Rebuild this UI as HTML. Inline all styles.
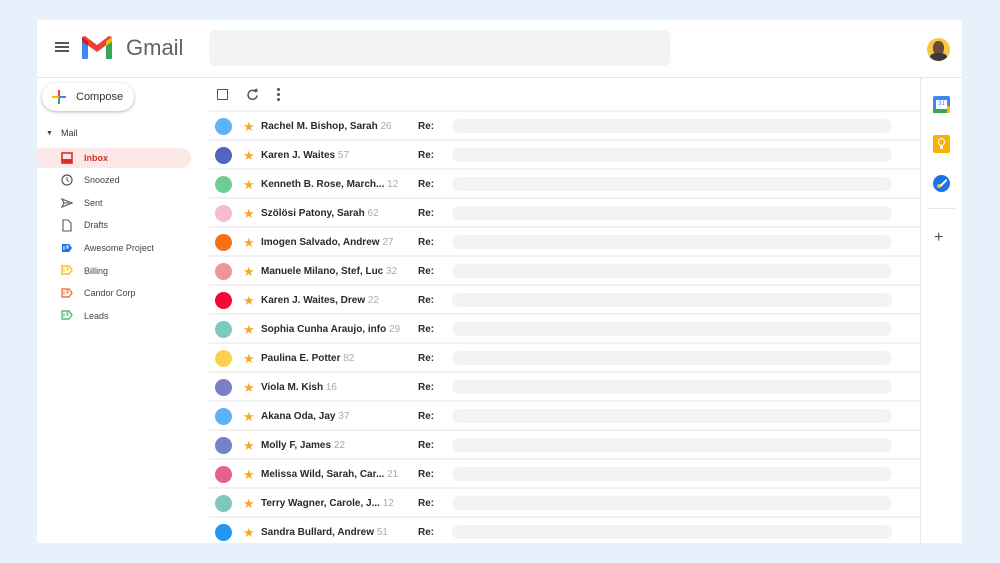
<!DOCTYPE html>
<html><head><meta charset="utf-8"><style>
*{margin:0;padding:0;box-sizing:border-box}
body{width:1000px;height:563px;background:#e8f1fb;font-family:"Liberation Sans",Arial,sans-serif;position:relative;overflow:hidden}
.panel{position:absolute;left:37px;top:20px;width:925px;height:523px;background:#fff;overflow:hidden}
.a{position:absolute}
.row{position:absolute;left:172px;width:711px;height:29px;border-bottom:2px solid #f1f1f1}
.row .c{position:absolute;left:6px;top:6px;width:17px;height:17px;border-radius:50%}
.row .s{position:absolute;left:34px;top:7px;font-size:13px;color:#f4a825;line-height:16px}
.row .n{position:absolute;left:52px;top:9px;font-size:10px;font-weight:bold;color:#2a2a2a;white-space:nowrap}
.row .n span{color:#aaa;font-weight:normal}
.row .r{position:absolute;left:209px;top:9px;font-size:10px;font-weight:bold;color:#2a2a2a}
.row .b{position:absolute;left:243px;top:7px;width:440px;height:14px;background:#f1f3f4;border-radius:7px}
.nav{position:absolute;left:47px;font-size:9px;color:#444}
.ic{position:absolute;left:24px}
</style></head><body>
<div class="panel">
 <div class="a" style="left:18px;top:22px;width:14px;height:2px;background:#555;box-shadow:0 4px 0 #555,0 8px 0 #555"></div>
 <svg class="a" style="left:45px;top:16px" width="30" height="23" viewBox="0 0 30 23">
  <rect x="0" y="4" width="6" height="19" rx="1" fill="#4285f4"/>
  <rect x="24" y="4" width="6" height="19" rx="1" fill="#34a853"/>
  <path d="M0 5 L15 16 L30 5 L30 1 L27 0 L15 9 L3 0 L0 1Z" fill="#ea4335"/>
  <path d="M0 1 L6 5.5 L6 10 L0 5.5Z" fill="#c5221f"/>
  <path d="M30 1 L24 5.5 L24 10 L30 5.5Z" fill="#fbbc04"/>
 </svg>
 <div class="a" style="left:89px;top:15px;font-size:22px;color:#5f6368">Gmail</div>
 <div class="a" style="left:172px;top:10px;width:461px;height:36px;background:#f1f3f4;border-radius:7px"></div>
 <div class="a" style="left:890px;top:18px;width:23px;height:23px;border-radius:50%;background:#f6c744;overflow:hidden">
  <div class="a" style="left:6px;top:3px;width:11px;height:14px;border-radius:45%;background:#6b4a3a"></div>
  <div class="a" style="left:3px;top:15px;width:17px;height:10px;border-radius:40%;background:#3a3a3a"></div>
 </div>
 <div class="a" style="left:0;top:57px;width:925px;height:1px;background:#e6e6e6"></div>
 <div class="a" style="left:5px;top:63px;width:92px;height:28px;border-radius:14px;background:#fff;box-shadow:0 1px 3px rgba(0,0,0,.3)"></div>
 <svg class="a" style="left:15px;top:70px" width="14" height="14"><rect x="6" y="0" width="2" height="7" fill="#ea4335"/><rect x="6" y="7" width="2" height="7" fill="#34a853"/><rect x="0" y="6" width="7" height="2" fill="#fbbc04"/><rect x="7" y="6" width="7" height="2" fill="#4285f4"/></svg>
 <div class="a" style="left:39px;top:71px;font-size:11px;color:#333">Compose</div>
 <div class="a" style="left:9px;top:110px;font-size:7px;color:#444">▼</div>
 <div class="a" style="left:24px;top:108px;font-size:9px;color:#333">Mail</div>
 <div class="a" style="left:0;top:128px;width:154px;height:20px;background:#fce8e6;border-radius:0 10px 10px 0"></div>
 <svg class="ic" style="top:132px" width="12" height="12"><rect x="1" y="1" width="10" height="10" fill="none" stroke="#d93025" stroke-width="1.6"/><rect x="1" y="7" width="10" height="4" fill="#d93025"/></svg>
 <div class="nav" style="top:133px;color:#d93025;font-weight:bold">Inbox</div>
 <svg class="ic" style="top:154px" width="12" height="12"><circle cx="6" cy="6" r="5" fill="none" stroke="#555" stroke-width="1.2"/><path d="M6 3v3l2 1.5" fill="none" stroke="#555"/></svg>
 <div class="nav" style="top:155px">Snoozed</div>
 <svg class="ic" style="top:177px" width="12" height="12"><path d="M1 2L11 6L1 10L3 6Z M3 6H8" fill="none" stroke="#555" stroke-width="1.1"/></svg>
 <div class="nav" style="top:178px">Sent</div>
 <svg class="ic" style="top:199px" width="12" height="13"><path d="M2 1H7L10 4V12H2Z" fill="none" stroke="#555" stroke-width="1.1"/></svg>
 <div class="nav" style="top:200px">Drafts</div>
 <svg class="ic" style="top:223px" width="12" height="10"><path d="M1 1H8L11 5L8 9H1Z" fill="#1a73e8"/><path d="M3 3V7M5 3H7V5H5" stroke="#fff" fill="none"/></svg>
 <div class="nav" style="top:223px">Awesome Project</div>
 <svg class="ic" style="top:245px" width="12" height="10"><path d="M1 1H8L11 5L8 9H1Z" fill="none" stroke="#f6bf26" stroke-width="1.4"/><path d="M3 3V7M5 3H7V5H5" stroke="#f6bf26" fill="none"/></svg>
 <div class="nav" style="top:246px">Billing</div>
 <svg class="ic" style="top:268px" width="12" height="10"><path d="M1 1H8L11 5L8 9H1Z" fill="none" stroke="#f4743a" stroke-width="1.4"/><path d="M3 3V7M5 3H7V5H5" stroke="#f4743a" fill="none"/></svg>
 <div class="nav" style="top:268px">Candor Corp</div>
 <svg class="ic" style="top:290px" width="12" height="10"><path d="M1 1H8L11 5L8 9H1Z" fill="none" stroke="#5bb974" stroke-width="1.4"/><path d="M3 3V7M5 3H7V5H5" stroke="#5bb974" fill="none"/></svg>
 <div class="nav" style="top:291px">Leads</div>
 <div class="a" style="left:180px;top:69px;width:11px;height:11px;border:1.5px solid #555"></div>
 <svg class="a" style="left:209px;top:68px" width="13" height="13"><path d="M10 4A4.5 4.5 0 1 0 11 7.5" fill="none" stroke="#555" stroke-width="1.5"/><path d="M8 1.5L11.5 4.5L11.5 0.5Z" fill="#555"/></svg>
 <div class="a" style="left:240px;top:68px;width:3px;height:3px;border-radius:50%;background:#555;box-shadow:0 5px 0 #555,0 10px 0 #555"></div>
 <div class="a" style="left:172px;top:90px;width:711px;height:2px;background:#f1f1f1"></div>
 <div class="a" style="left:883px;top:58px;width:1px;height:470px;background:#e6e6e6"></div>
 <div class="a" style="left:896px;top:76px;width:17px;height:17px;background:#4285f4;border-radius:2px">
  <div class="a" style="left:3px;top:4px;width:11px;height:9px;background:#fff;font-size:6px;color:#4285f4;text-align:center;line-height:9px">31</div>
  <div class="a" style="left:14px;top:10px;width:3px;height:7px;background:#fbbc04"></div>
  <div class="a" style="left:0;top:14px;width:14px;height:3px;background:#34a853"></div>
 </div>
 <div class="a" style="left:896px;top:115px;width:17px;height:18px;background:#f6b400;border-radius:2px">
  <div class="a" style="left:5px;top:3px;width:7px;height:8px;border:1.3px solid #fff;border-radius:50%"></div>
  <div class="a" style="left:7px;top:11px;width:3px;height:3px;background:#fff"></div>
 </div>
 <div class="a" style="left:896px;top:155px;width:17px;height:17px;background:#1a73e8;border-radius:50%">
  <div class="a" style="left:4px;top:9px;width:4px;height:4px;background:#fbbc04;border-radius:50%"></div>
  <div class="a" style="left:6px;top:7px;width:9px;height:2px;background:#fff;transform:rotate(-45deg)"></div>
 </div>
 <div class="a" style="left:891px;top:188px;width:27px;height:1px;background:#e6e6e6"></div>
 <div class="a" style="left:897px;top:210px;font-size:16px;color:#555;line-height:16px">+</div>
 <div class="row" style="top:92px"><div class="c" style="background:#5eb2f5"></div><div class="s">★</div><div class="n">Rachel M. Bishop, Sarah <span>26</span></div><div class="r">Re:</div><div class="b"></div></div>
 <div class="row" style="top:121px"><div class="c" style="background:#5463c1"></div><div class="s">★</div><div class="n">Karen J. Waites <span>57</span></div><div class="r">Re:</div><div class="b"></div></div>
 <div class="row" style="top:150px"><div class="c" style="background:#6cce95"></div><div class="s">★</div><div class="n">Kenneth B. Rose, March... <span>12</span></div><div class="r">Re:</div><div class="b"></div></div>
 <div class="row" style="top:179px"><div class="c" style="background:#f6bcd4"></div><div class="s">★</div><div class="n">Szölösi Patony, Sarah <span>62</span></div><div class="r">Re:</div><div class="b"></div></div>
 <div class="row" style="top:208px"><div class="c" style="background:#f57213"></div><div class="s">★</div><div class="n">Imogen Salvado, Andrew <span>27</span></div><div class="r">Re:</div><div class="b"></div></div>
 <div class="row" style="top:237px"><div class="c" style="background:#f39593"></div><div class="s">★</div><div class="n">Manuele Milano, Stef, Luc <span>32</span></div><div class="r">Re:</div><div class="b"></div></div>
 <div class="row" style="top:266px"><div class="c" style="background:#f5073a"></div><div class="s">★</div><div class="n">Karen J. Waites, Drew <span>22</span></div><div class="r">Re:</div><div class="b"></div></div>
 <div class="row" style="top:295px"><div class="c" style="background:#7dc8c0"></div><div class="s">★</div><div class="n">Sophia Cunha Araujo, info <span>29</span></div><div class="r">Re:</div><div class="b"></div></div>
 <div class="row" style="top:324px"><div class="c" style="background:#fdd150"></div><div class="s">★</div><div class="n">Paulina E. Potter <span>82</span></div><div class="r">Re:</div><div class="b"></div></div>
 <div class="row" style="top:353px"><div class="c" style="background:#7780c8"></div><div class="s">★</div><div class="n">Viola M. Kish <span>16</span></div><div class="r">Re:</div><div class="b"></div></div>
 <div class="row" style="top:382px"><div class="c" style="background:#5eb2f5"></div><div class="s">★</div><div class="n">Akana Oda, Jay <span>37</span></div><div class="r">Re:</div><div class="b"></div></div>
 <div class="row" style="top:411px"><div class="c" style="background:#7780c8"></div><div class="s">★</div><div class="n">Molly F, James <span>22</span></div><div class="r">Re:</div><div class="b"></div></div>
 <div class="row" style="top:440px"><div class="c" style="background:#e95f8b"></div><div class="s">★</div><div class="n">Melissa Wild, Sarah, Car... <span>21</span></div><div class="r">Re:</div><div class="b"></div></div>
 <div class="row" style="top:469px"><div class="c" style="background:#7dc8c0"></div><div class="s">★</div><div class="n">Terry Wagner, Carole, J... <span>12</span></div><div class="r">Re:</div><div class="b"></div></div>
 <div class="row" style="top:498px"><div class="c" style="background:#2196f3"></div><div class="s">★</div><div class="n">Sandra Bullard, Andrew <span>51</span></div><div class="r">Re:</div><div class="b"></div></div>
</div>
</body></html>
